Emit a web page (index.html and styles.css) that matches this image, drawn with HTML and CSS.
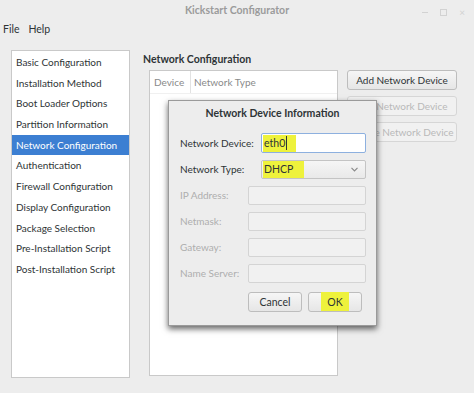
FILE: index.html
```html
<!DOCTYPE html>
<html lang="en">
<head>
  <meta charset="UTF-8">
  <title>Kickstart Configurator</title>
  <link rel="stylesheet" href="styles.css">
</head>
<body>
  <div class="window">
    <header class="titlebar">
      <span class="title">Kickstart Configurator</span>
      <div class="controls">
        <span class="ctl-min"></span>
        <span class="ctl-max"></span>
        <span class="ctl-close">&times;</span>
      </div>
    </header>

    <nav class="menubar">
      <span>File</span>
      <span>Help</span>
    </nav>

    <div class="content">
      <ul class="sidebar">
        <li>Basic Configuration</li>
        <li>Installation Method</li>
        <li>Boot Loader Options</li>
        <li>Partition Information</li>
        <li class="selected">Network Configuration</li>
        <li>Authentication</li>
        <li>Firewall Configuration</li>
        <li>Display Configuration</li>
        <li>Package Selection</li>
        <li>Pre-Installation Script</li>
        <li>Post-Installation Script</li>
      </ul>

      <section class="main">
        <h2>Network Configuration</h2>
        <div class="main-row">
          <div class="device-table">
            <div class="table-head">
              <span class="col-device">Device</span>
              <span class="col-type">Network Type</span>
            </div>
          </div>
          <div class="actions">
            <button class="btn">Add Network Device</button>
            <button class="btn" disabled>Edit Network Device</button>
            <button class="btn" disabled>Delete Network Device</button>
          </div>
        </div>
      </section>
    </div>

    <!-- modal dialog on top of the window -->
    <div class="dialog">
      <div class="dialog-title">Network Device Information</div>

      <div class="form-row">
        <label>Network Device:</label>
        <div class="field focused"><span class="hl">eth0</span><span class="caret"></span></div>
      </div>
      <div class="form-row">
        <label>Network Type:</label>
        <div class="field combo">
          <span class="hl">DHCP</span>
          <svg class="chev" width="7" height="5" viewBox="0 0 7 5"><path d="M0.5 0.8 L3.5 3.8 L6.5 0.8" fill="none" stroke="#8a8a8a" stroke-width="1.2"/></svg>
        </div>
      </div>

      <div class="form-row off">
        <label>IP Address:</label>
        <div class="field wide"></div>
      </div>
      <div class="form-row off">
        <label>Netmask:</label>
        <div class="field wide"></div>
      </div>
      <div class="form-row off">
        <label>Gateway:</label>
        <div class="field wide"></div>
      </div>
      <div class="form-row off">
        <label>Name Server:</label>
        <div class="field wide"></div>
      </div>

      <div class="dialog-buttons">
        <button class="btn">Cancel</button>
        <button class="btn"><span class="hl ok">OK</span></button>
      </div>
    </div>
  </div>
</body>
</html>
```

FILE: styles.css
```css
body {
  margin: 0;
  padding: 0;
  font-family: 'Lato', 'Liberation Sans', sans-serif;
  font-size: 10px;
  color: #2e3436;
  background-color: #ededed;
}

.window {
  position: relative;
  width: 474px;
  height: 393px;
  overflow: hidden;
  background-color: #ededed;
}

.titlebar {
  height: 19px;
  display: flex;
  justify-content: center;
  align-items: center;
  position: relative;
}

.title {
  font-weight: 700;
  font-size: 10.5px;
  color: #9b9b9b;
}

.controls {
  position: absolute;
  right: 9px;
  top: 8px;
  display: flex;
  align-items: center;
  gap: 12px;
}

.ctl-min {
  width: 6px;
  height: 1px;
  background: #d2d2d2;
}

.ctl-max {
  width: 5px;
  height: 5px;
  border: 1px solid #d2d2d2;
}

.ctl-close {
  color: #d2d2d2;
  font-size: 10px;
  line-height: 8px;
}

.menubar {
  height: 20px;
  line-height: 20px;
  padding-left: 3px;
  display: flex;
  gap: 9px;
  font-size: 10.5px;
}

.content {
  display: flex;
  padding: 11px 0 0 11px;
}

.sidebar {
  list-style: none;
  margin: 0;
  padding: 1px 0 0 0;
  width: 117px;
  height: 325px;
  background: #fff;
  border: 1px solid #c9c9c9;
}

.sidebar li {
  height: 20.7px;
  line-height: 20.7px;
  padding-left: 4px;
  white-space: nowrap;
}

.sidebar li.selected {
  background: #3c7fd2;
  color: #fff;
}

.main {
  margin-left: 13px;
}

.main h2 {
  margin: 0;
  font-size: 10.5px;
  font-weight: 700;
  height: 20px;
  line-height: 18px;
}

.main-row {
  display: flex;
  gap: 9px;
  margin-left: 6px;
}

.device-table {
  width: 187px;
  height: 304px;
  background: #fff;
  border: 1px solid #c9c9c9;
}

.table-head {
  display: flex;
  height: 22px;
  line-height: 22px;
  color: #8a8a8a;
  border-bottom: 1px solid #f0f0f0;
}

.col-device {
  width: 36px;
  padding-left: 4px;
  border-right: 1px solid #e2e2e2;
}

.col-type {
  padding-left: 3px;
}

.actions {
  display: flex;
  flex-direction: column;
  gap: 6px;
}

.btn {
  font-family: inherit;
  font-size: 10px;
  color: #2e3436;
  height: 20px;
  padding: 0;
  border: 1px solid #bdbdbd;
  border-radius: 3px;
  background: linear-gradient(#f6f6f6, #e6e6e6);
}

.actions .btn {
  width: 110px;
}

.btn:disabled {
  color: #b9b9b9;
  background: #f1f1f1;
  border-color: #d6d6d6;
}

.dialog {
  position: absolute;
  left: 168px;
  top: 100px;
  width: 198px;
  height: 224px;
  padding: 0 0 0 9px;
  background: #ededed;
  border: 1px solid #9a9a9a;
  box-shadow: 0 3px 6px rgba(0, 0, 0, 0.6);
}

.dialog-title {
  height: 24px;
  line-height: 24px;
  text-align: center;
  font-weight: 700;
  font-size: 10.5px;
  margin-left: -9px;
  margin-bottom: 8px;
}

.form-row {
  display: flex;
  justify-content: space-between;
  align-items: center;
  height: 20px;
  margin: 0 10px 6px 2px;
  font-size: 10px;
}

.form-row.off {
  color: #adadad;
}

.field {
  box-sizing: border-box;
  width: 105px;
  height: 20px;
  background: #fff;
  border: 1px solid #c2c2c2;
  border-radius: 2px;
  display: flex;
  align-items: center;
  padding-left: 1px;
  font-size: 10.5px;
}

.field.focused {
  border-color: #8db0df;
}

.field.combo {
  height: 19px;
  background: linear-gradient(#f6f6f6, #e9e9e9);
  border-color: #c4c4c4;
  justify-content: space-between;
}

.field.wide {
  width: 118px;
  height: 19px;
  background: #f1f1f1;
  border-color: #d4d4d4;
}

.hl {
  background: #eef23c;
  line-height: 17px;
  padding: 0 11px 0 1px;
}

.caret {
  width: 1px;
  height: 14px;
  background: #2e3436;
  margin-left: -10px;
}

.chev {
  margin-right: 7px;
}

.dialog-buttons {
  display: flex;
  justify-content: flex-end;
  gap: 6px;
  margin: 9px 14px 0 0;
}

.dialog-buttons .btn {
  width: 54px;
  font-size: 10.5px;
}

.hl.ok {
  padding: 4px 6px 3px 6px;
}
```
